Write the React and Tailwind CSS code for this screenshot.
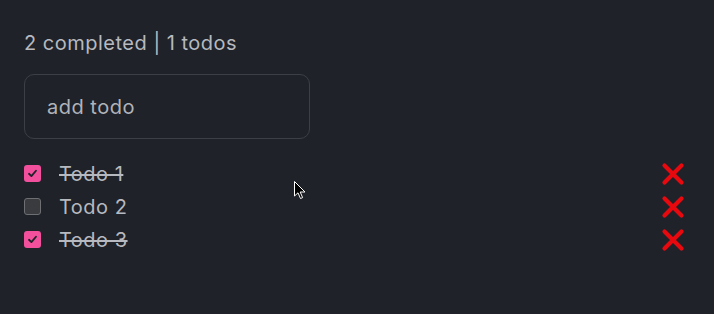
import React from "react";

function Check({ checked }) {
  if (checked) {
    return (
      <span className="flex h-[17px] w-[17px] items-center justify-center rounded-[3px] bg-[#f2509c]">
        <svg width="11" height="11" viewBox="0 0 12 12">
          <path d="M2.2 6.3 L4.8 8.8 L9.8 3" fill="none" stroke="#1f2229" strokeWidth="2" strokeLinecap="round" strokeLinejoin="round" />
        </svg>
      </span>
    );
  }
  return <span className="h-[17px] w-[17px] rounded-[3px] border border-[#6d6f73] bg-[#3a3b3e]" />;
}

function Cross() {
  return (
    <svg width="24" height="24" viewBox="0 0 24 24">
      <path d="M3.5 3.5 L20.5 20.5 M20.5 3.5 L3.5 20.5" stroke="#e8090f" strokeWidth="4.2" strokeLinecap="round" />
    </svg>
  );
}

const todos = [
  { text: "Todo 1", done: true },
  { text: "Todo 2", done: false },
  { text: "Todo 3", done: true },
];

export default function App() {
  return (
    <div className="relative h-[314px] w-[714px] overflow-hidden bg-[#1f2229] font-['Inter',sans-serif] text-[20px] tracking-[0.5px] text-[#b6b9bf]">
      <div className="px-6 pt-[30px]">
        <div className="leading-[26px]">2 completed | 1 todos</div>
        <div className="mt-[18px] flex h-[65px] w-[286px] items-center rounded-[10px] border border-[#3c3f46] px-[22px] text-[#b0b3b9]">
          add todo
        </div>
        <div className="mt-[18px] flex flex-col">
          {todos.map((t) => (
            <div key={t.text} className="flex h-[33px] items-center pr-[5px]">
              <Check checked={t.done} />
              <span className={"ml-[18px] " + (t.done ? "line-through" : "")}>{t.text}</span>
              <span className="ml-auto">
                <Cross />
              </span>
            </div>
          ))}
        </div>
      </div>
      <svg className="absolute left-[294px] top-[181px]" width="12" height="19" viewBox="0 0 12 19">
        <path d="M0.5 0.5 L0.5 15 L4 11.8 L6.5 17.5 L8.6 16.6 L6.2 11 L11 11 Z" fill="#000" stroke="#fff" strokeWidth="1" />
      </svg>
    </div>
  );
}
